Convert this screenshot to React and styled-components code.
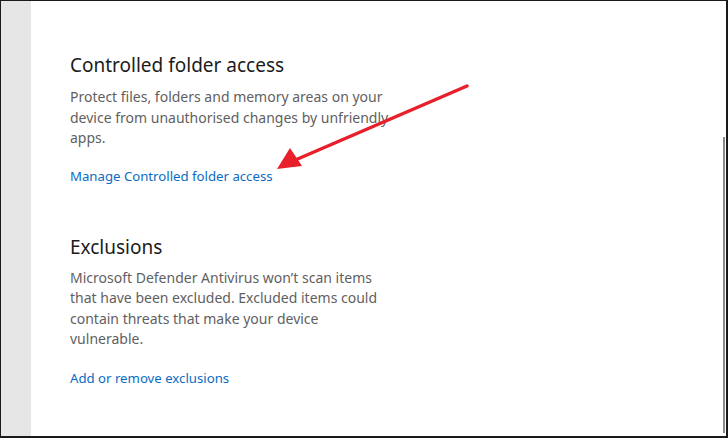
import styled, { createGlobalStyle } from "styled-components";

const Global = createGlobalStyle`
  html, body { margin: 0; padding: 0; background: #fff; }
  body { font-family: "Noto Sans", "Open Sans", sans-serif; }
`;

const Frame = styled.div`
  width: 728px;
  height: 438px;
  box-sizing: border-box;
  border: 1px solid #1a1a1a;
  border-right-width: 2px;
  border-bottom-width: 2px;
  display: flex;
  position: relative;
  overflow: hidden;
`;

const Rail = styled.div`
  width: 30px;
  background: #e6e6e6;
  flex-shrink: 0;
`;

const Content = styled.main`
  flex: 1;
  padding: 50px 0 0 39px;
  display: flex;
  flex-direction: column;
  gap: 48px;
`;

const Section = styled.section`
  display: flex;
  flex-direction: column;
  width: 321px;
`;

const Title = styled.h2`
  margin: 0 0 ${p => p.gap ?? 8}px;
  font-size: 19px;
  font-weight: 400;
  color: #1b1b1b;
  line-height: 28px;
`;

const Desc = styled.p`
  margin: 0 0 ${p => p.gap ?? 18}px;
  font-size: 14px;
  line-height: 20.5px;
  color: #5f5f5f;
`;

const Link = styled.a`
  font-size: 13.2px;
  color: #0a6cc4;
  text-decoration: none;
  cursor: pointer;
`;

const Scrollbar = styled.div`
  position: absolute;
  right: 1px;
  top: 136px;
  bottom: 3px;
  width: 2px;
  background: #8a8a8a;
`;

const Arrow = styled.svg`
  position: absolute;
  left: 0;
  top: 0;
  pointer-events: none;
`;

export default function App() {
  return (
    <>
      <Global />
      <Frame>
        <Rail />
        <Content>
          <Section>
            <Title>Controlled folder access</Title>
            <Desc>
              Protect files, folders and memory areas on your device from unauthorised changes by unfriendly apps.
            </Desc>
            <Link>Manage Controlled folder access</Link>
          </Section>
          <Section>
            <Title gap={7}>Exclusions</Title>
            <Desc gap={19}>
              Microsoft Defender Antivirus won’t scan items that have been excluded. Excluded items could contain threats that make your device vulnerable.
            </Desc>
            <Link>Add or remove exclusions</Link>
          </Section>
        </Content>
        <Scrollbar />
        <Arrow width="728" height="438" viewBox="0 0 728 438">
          <line x1="466" y1="85" x2="292" y2="160" stroke="#e8202b" strokeWidth="3.5" strokeLinecap="round" />
          <polygon points="276,168 289,147 301,165" fill="#e8202b" />
        </Arrow>
      </Frame>
    </>
  );
}
